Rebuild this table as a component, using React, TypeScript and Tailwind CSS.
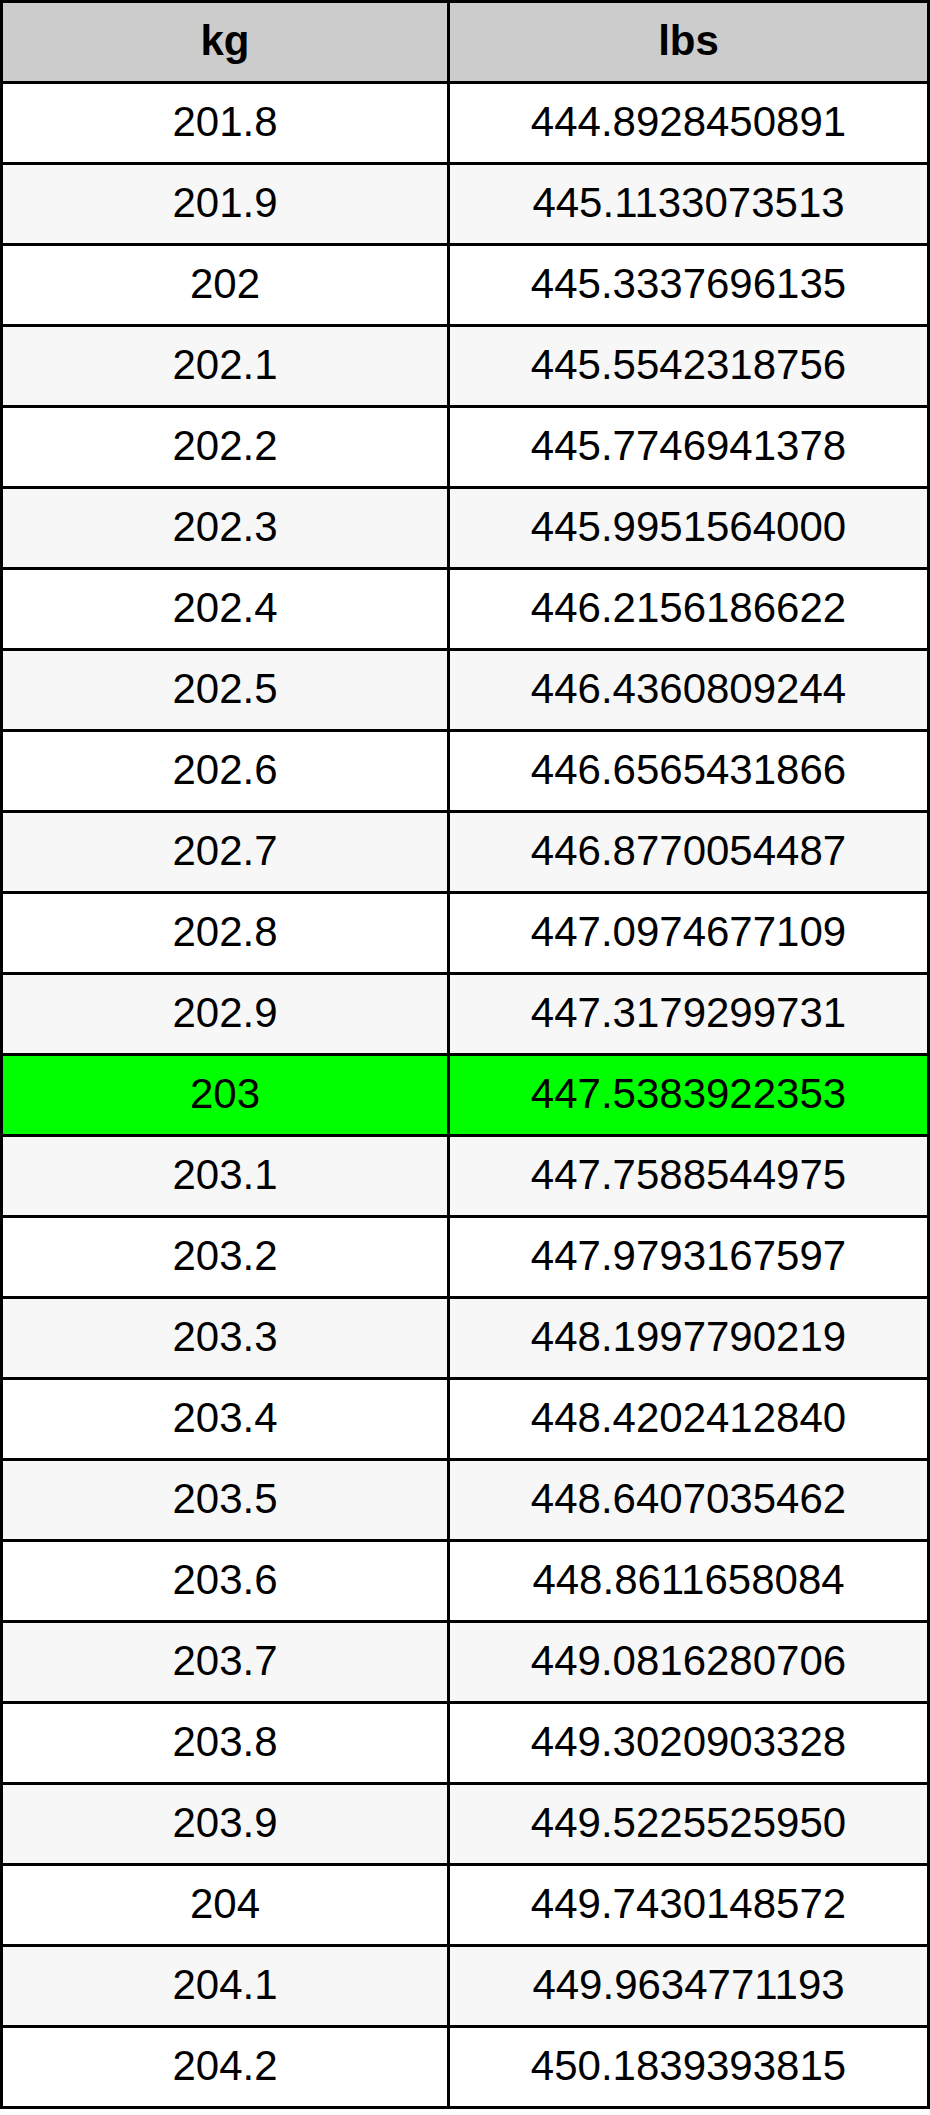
const ROWS: [string, string][] = [
  ["201.8", "444.8928450891"],
  ["201.9", "445.1133073513"],
  ["202", "445.3337696135"],
  ["202.1", "445.5542318756"],
  ["202.2", "445.7746941378"],
  ["202.3", "445.9951564000"],
  ["202.4", "446.2156186622"],
  ["202.5", "446.4360809244"],
  ["202.6", "446.6565431866"],
  ["202.7", "446.8770054487"],
  ["202.8", "447.0974677109"],
  ["202.9", "447.3179299731"],
  ["203", "447.5383922353"],
  ["203.1", "447.7588544975"],
  ["203.2", "447.9793167597"],
  ["203.3", "448.1997790219"],
  ["203.4", "448.4202412840"],
  ["203.5", "448.6407035462"],
  ["203.6", "448.8611658084"],
  ["203.7", "449.0816280706"],
  ["203.8", "449.3020903328"],
  ["203.9", "449.5225525950"],
  ["204", "449.7430148572"],
  ["204.1", "449.9634771193"],
  ["204.2", "450.1839393815"],
];

function Row({ kg, lbs, index }: { kg: string; lbs: string; index: number }) {
  const highlight = kg === "203";
  const bg = highlight ? "bg-[#00ff00]" : index % 2 === 0 ? "bg-white" : "bg-[#f7f7f7]";
  return (
    <div className={`flex h-[81px] border-t-[3px] border-black ${bg}`}>
      <div className="flex w-[447px] items-center justify-center border-r-[3px] border-black pb-[3px]">
        {kg}
      </div>
      <div className="flex flex-1 items-center justify-center pb-[3px]">{lbs}</div>
    </div>
  );
}

export default function App() {
  return (
    <div className="bg-white">
      <div
        className="w-[930px] border-[3px] border-black text-[42px] leading-none text-black"
        style={{ fontFamily: '"Liberation Sans", Arial, sans-serif' }}
      >
        <div className="flex h-[78px] bg-[#cccccc] font-bold">
          <div className="flex w-[447px] items-center justify-center border-r-[3px] border-black pb-[3px]">
            kg
          </div>
          <div className="flex flex-1 items-center justify-center pb-[3px]">lbs</div>
        </div>
        {ROWS.map(([kg, lbs], i) => (
          <Row key={kg} kg={kg} lbs={lbs} index={i} />
        ))}
      </div>
    </div>
  );
}
